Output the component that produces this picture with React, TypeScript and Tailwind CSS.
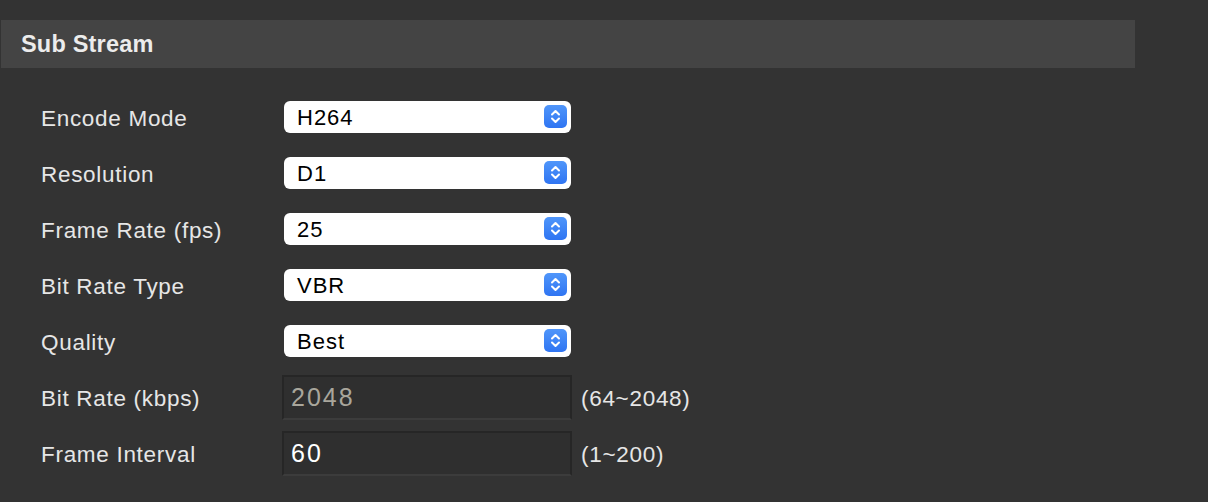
import React from 'react';

const font = { fontFamily: '"Liberation Sans", Arial, sans-serif' };

interface SelectRow {
  label: string;
  value: string;
}

const selects: SelectRow[] = [
  { label: 'Encode Mode', value: 'H264' },
  { label: 'Resolution', value: 'D1' },
  { label: 'Frame Rate (fps)', value: '25' },
  { label: 'Bit Rate Type', value: 'VBR' },
  { label: 'Quality', value: 'Best' },
];

const Stepper: React.FC = () => (
  <span className="flex h-[23px] w-[23px] items-center justify-center rounded-[5px] bg-gradient-to-b from-[#5096fa] to-[#2f74f2]">
    <svg width="11" height="15" viewBox="0 0 11 15" fill="none">
      <path d="M2 5.5 5.5 2 9 5.5" stroke="white" strokeWidth="2" strokeLinecap="round" strokeLinejoin="round" />
      <path d="M2 9.5 5.5 13 9 9.5" stroke="white" strokeWidth="2" strokeLinecap="round" strokeLinejoin="round" />
    </svg>
  </span>
);

const Label: React.FC<{ children: React.ReactNode }> = ({ children }) => (
  <div className="w-[243px] shrink-0 pt-[3px] text-[22.5px] tracking-[0.7px] text-[#e6e6e6]">{children}</div>
);

const App: React.FC = () => {
  return (
    <div className="h-[502px] w-[1208px] bg-[#333333] pt-5" style={font}>
      <div className="ml-px flex h-12 w-[1134px] items-center bg-[#444444] pl-5 pt-[2px]">
        <span className="text-[23.5px] font-bold tracking-[0.2px] text-[#ececec]">Sub Stream</span>
      </div>

      <div className="pl-[41px] pt-[21px]">
        {selects.map((row) => (
          <div key={row.label} className="flex h-14 items-center">
            <Label>{row.label}</Label>
            <div className="-mt-[1px] flex h-8 w-[287px] items-center justify-between rounded-[6px] bg-white pl-[13px] pr-1">
              <span className="pt-[1px] text-[22px] tracking-[1px] text-black">{row.value}</span>
              <Stepper />
            </div>
          </div>
        ))}

        <div className="flex h-14 items-center">
          <Label>Bit Rate (kbps)</Label>
          <div className="-ml-[2px] flex h-[45px] w-[290px] items-center border-2 border-[#262626] border-b-[#3c3c3c] bg-[#2f2f2f] pl-[7px] pt-[2px]">
            <span className="text-[25px] tracking-[2px] text-[#a9a69c]">2048</span>
          </div>
          <span className="ml-[9px] pt-[3px] text-[22.5px] tracking-[0.7px] text-[#e6e6e6]">(64~2048)</span>
        </div>

        <div className="flex h-14 items-center">
          <Label>Frame Interval</Label>
          <div className="-ml-[2px] flex h-[45px] w-[290px] items-center border-2 border-[#262626] border-b-[#3c3c3c] bg-[#2f2f2f] pl-[7px] pt-[2px]">
            <span className="text-[25px] tracking-[2px] text-white">60</span>
          </div>
          <span className="ml-[9px] pt-[3px] text-[22.5px] tracking-[0.7px] text-[#e6e6e6]">(1~200)</span>
        </div>
      </div>
    </div>
  );
};

export default App;
